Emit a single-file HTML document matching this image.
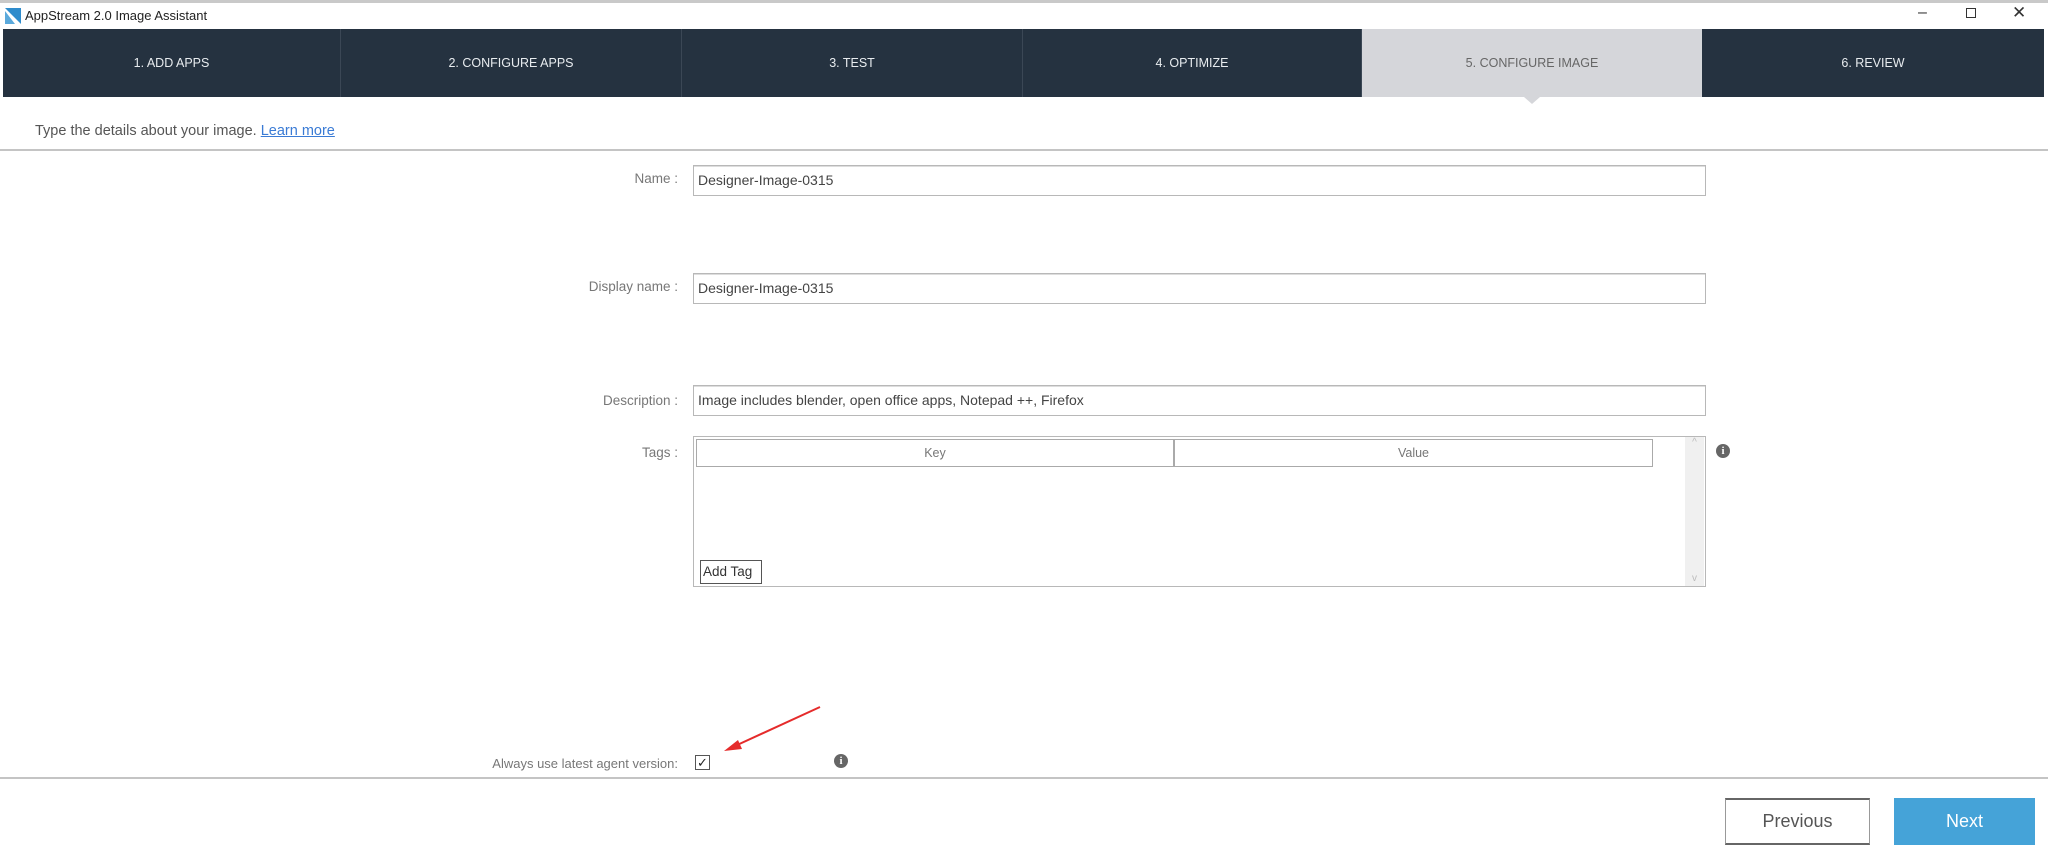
<!DOCTYPE html>
<html><head><meta charset="utf-8"><style>
*{margin:0;padding:0;box-sizing:border-box}
body{width:2048px;height:867px;background:#fff;position:relative;overflow:hidden;font-family:"Liberation Sans",sans-serif;color:#555}
.a{position:absolute}
.tab{position:absolute;top:29px;height:68px;background:#253240;color:#e8ecef;font-size:12.5px;display:flex;align-items:center;justify-content:center;border-right:1px solid #3b4755}
.lbl{position:absolute;right:1370px;font-size:13.5px;color:#777;text-align:right;white-space:nowrap}
.inp{position:absolute;left:693px;width:1013px;height:31px;border:1px solid #b8b8b8;box-shadow:inset 0 1px 0 #ddd;font-size:14px;color:#444;padding-left:4px;line-height:29px}
.info{position:absolute;width:14px;height:14px;border-radius:50%;background:#666;color:#fff;font-size:11px;font-weight:bold;text-align:center;line-height:14px;font-family:"Liberation Serif",serif}
</style></head><body>
<div class="a" style="left:0;top:0;width:2048px;height:3px;background:#c9c9c9"></div>
<svg class="a" style="left:5px;top:8px" width="16" height="16" viewBox="0 0 16 16"><polygon points="0,0 16,0 16,16" fill="#2f8ccc"/><polygon points="0,3 10,16 0,16" fill="#5aa9dc"/></svg>
<div class="a" style="left:25px;top:8px;font-size:13px;color:#222">AppStream 2.0 Image Assistant</div>
<div class="a" style="left:1918px;top:4px;font-size:16px;color:#333">–</div>
<div class="a" style="left:1966px;top:8px;width:10px;height:10px;border:1.5px solid #333"></div>
<div class="a" style="left:2012px;top:3px;font-size:17px;color:#333">✕</div>
<div class="tab" style="left:3px;width:338px">1. ADD APPS</div>
<div class="tab" style="left:341px;width:341px">2. CONFIGURE APPS</div>
<div class="tab" style="left:682px;width:341px">3. TEST</div>
<div class="tab" style="left:1023px;width:339px">4. OPTIMIZE</div>
<div class="tab" style="left:1362px;width:340px;background:#d5d6da;color:#666;border:none">5. CONFIGURE IMAGE</div>
<div class="tab" style="left:1702px;width:342px;border:none">6. REVIEW</div>
<div class="a" style="left:1524px;top:97px;width:0;height:0;border-left:8px solid transparent;border-right:8px solid transparent;border-top:7px solid #d5d6da"></div>
<div class="a" style="left:35px;top:123px;font-size:14.5px;color:#555">Type the details about your image. <span style="color:#3a7bd5;text-decoration:underline">Learn more</span></div>
<div class="a" style="left:0;top:149px;width:2048px;height:2px;background:#c4c4c4"></div>

<div class="lbl" style="top:171px">Name :</div>
<div class="inp" style="top:165px">Designer-Image-0315</div>
<div class="lbl" style="top:279px">Display name :</div>
<div class="inp" style="top:273px">Designer-Image-0315</div>
<div class="lbl" style="top:393px">Description :</div>
<div class="inp" style="top:385px">Image includes blender, open office apps, Notepad ++, Firefox</div>
<div class="lbl" style="top:445px">Tags :</div>
<div class="a" style="left:693px;top:436px;width:1013px;height:151px;border:1px solid #b8b8b8"></div>
<div class="a" style="left:696px;top:439px;width:478px;height:28px;border:1px solid #aaa;font-size:12.5px;color:#777;text-align:center;line-height:26px">Key</div>
<div class="a" style="left:1174px;top:439px;width:479px;height:28px;border:1px solid #aaa;font-size:12.5px;color:#777;text-align:center;line-height:26px">Value</div>
<div class="a" style="left:1685px;top:437px;width:19px;height:149px;background:#f0f0f0;font-size:10px;color:#bbb;text-align:center">^<div style="position:absolute;bottom:2px;width:19px">v</div></div>
<div class="a" style="left:700px;top:560px;width:62px;height:24px;border:1px solid #555;font-size:13.5px;color:#333;line-height:22px;padding-left:2px">Add Tag</div>
<div class="info" style="left:1716px;top:444px">i</div>

<div class="lbl" style="top:756px;font-size:13px">Always use latest agent version:</div>
<div class="a" style="left:695px;top:755px;width:15px;height:15px;border:1px solid #555;font-size:13px;line-height:13px;text-align:center;color:#222">✓</div>
<div class="info" style="left:834px;top:754px">i</div>
<svg class="a" style="left:0;top:0" width="2048" height="867"><line x1="820" y1="707" x2="735" y2="746" stroke="#e52b2b" stroke-width="2"/><polygon points="724,751 738,740 742,749" fill="#e52b2b"/></svg>
<div class="a" style="left:0;top:777px;width:2048px;height:2px;background:#c4c4c4"></div>
<div class="a" style="left:1725px;top:798px;width:145px;height:47px;border:1px solid #999;border-top:2px solid #666;border-bottom:2px solid #666;font-size:18px;color:#555;text-align:center;line-height:43px">Previous</div>
<div class="a" style="left:1894px;top:798px;width:141px;height:47px;background:#45a3d8;font-size:18px;color:#fff;text-align:center;line-height:47px">Next</div>
</body></html>
